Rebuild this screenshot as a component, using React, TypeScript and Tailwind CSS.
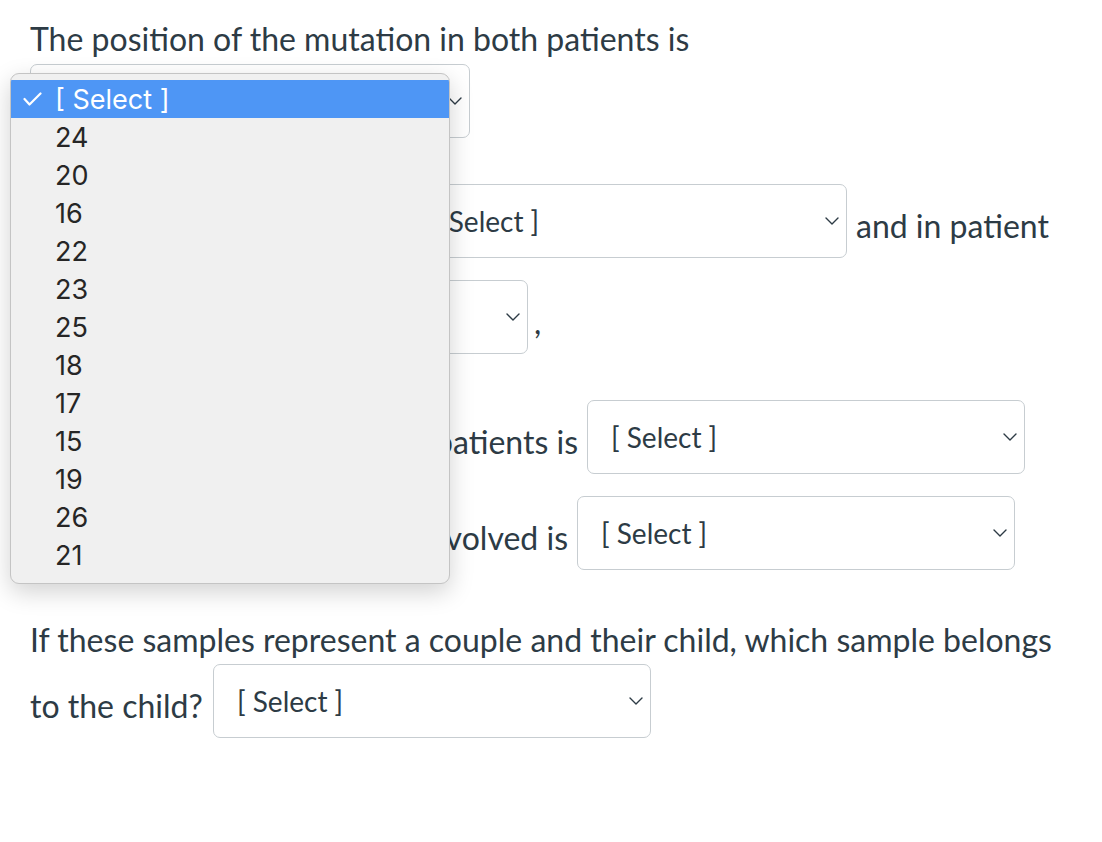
const options = ['24', '20', '16', '22', '23', '25', '18', '17', '15', '19', '26', '21'];

function Chevron() {
  return (
    <svg width="14" height="8" viewBox="0 0 14 8" fill="none" className="shrink-0">
      <polyline points="1,1 7,7 13,1" stroke="#2d3b45" strokeWidth="1.4" strokeLinecap="round" strokeLinejoin="round" />
    </svg>
  );
}

function Select({ width, text = '[ Select ]' }: { width: string; text?: string }) {
  return (
    <div
      className={`${width} h-[74px] shrink-0 flex items-center justify-between pl-[23px] pr-[7px] bg-white border border-[#c7cdd1] rounded-[7px]`}
    >
      <span className="text-[28px] leading-none pb-[1px] text-[#2d3b45]">{text}</span>
      <Chevron />
    </div>
  );
}

export default function App() {
  return (
    <div
      className="relative w-[1102px] h-[842px] bg-white text-[#2d3b45] pl-[30px] pt-[15px] text-[32px] leading-[48px]"
      style={{ fontFamily: 'Lato, "Open Sans", sans-serif' }}
    >
      {/* question text */}
      <p>The position of the mutation in both patients is</p>
      <div className="mt-[1px]">
        <Select width="w-[440px]" />
      </div>

      <div className="flex items-start mt-[46px]">
        <span className="w-[370px] text-right whitespace-nowrap mt-[18px]">In patient 1 it is</span>
        <div className="ml-[9px]">
          <Select width="w-[438px]" />
        </div>
        <span className="ml-[9px] whitespace-nowrap mt-[18px]">and in patient</span>
      </div>

      <div className="flex items-start mt-[22px]">
        <span className="w-[51px] whitespace-nowrap mt-[18px]">2 is</span>
        <div className="ml-[9px]">
          <Select width="w-[438px]" />
        </div>
        <span className="ml-[6px] mt-[18px]">,</span>
      </div>

      <div className="flex items-start mt-[46px]">
        <span className="w-[548px] text-right whitespace-nowrap mt-[18px]">The mutation in both patients is</span>
        <div className="ml-[9px]">
          <Select width="w-[438px]" />
        </div>
      </div>

      <div className="flex items-start mt-[22px]">
        <span className="w-[538px] text-right whitespace-nowrap mt-[18px]">The residue involved is</span>
        <div className="ml-[9px]">
          <Select width="w-[438px]" />
        </div>
      </div>

      <p className="mt-[46px]">If these samples represent a couple and their child, which sample belongs</p>
      <div className="flex items-start">
        <span className="w-[174px] whitespace-nowrap mt-[18px]">to the child?</span>
        <div className="ml-[9px]">
          <Select width="w-[438px]" />
        </div>
      </div>

      {/* open native popup menu */}
      <div
        className="absolute left-[10px] top-[73px] w-[440px] h-[511px] pt-[6px] bg-[#f0f0f0] border border-[#c4c4c4] rounded-[9px] shadow-[0_8px_24px_rgba(0,0,0,0.18)] overflow-hidden text-[27px] leading-none"
        style={{ fontFamily: 'Inter, "Liberation Sans", sans-serif' }}
      >
        <div className="flex items-center h-[38px] bg-[#4e96f5] text-white">
          <span className="w-[44px] pl-[12px] flex items-center">
            <svg width="19" height="14" viewBox="0 0 19 14" fill="none">
              <polyline points="1.5,7 6.5,12.5 17.5,1.5" stroke="white" strokeWidth="2.2" strokeLinecap="round" strokeLinejoin="round" />
            </svg>
          </span>
          <span>[ Select ]</span>
        </div>
        {options.map((o) => (
          <div key={o} className="flex items-center h-[38px] text-[#262626]">
            <span className="w-[44px]" />
            <span>{o}</span>
          </div>
        ))}
      </div>
    </div>
  );
}
